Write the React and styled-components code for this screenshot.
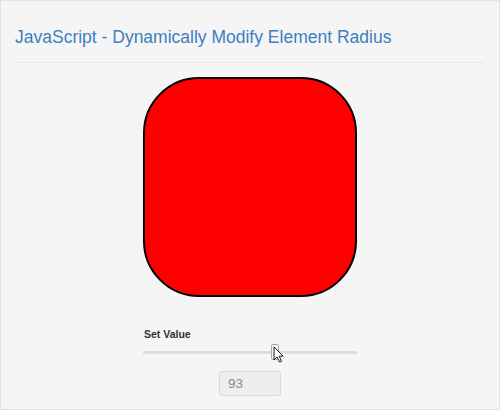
import React, { useState } from 'react';
import styled, { createGlobalStyle } from 'styled-components';

const GlobalStyle = createGlobalStyle`
  html, body {
    margin: 0;
    padding: 0;
    background: #ffffff;
  }
  * {
    box-sizing: border-box;
  }
`;

const MAX = 150;

const App = () => {
  const [radius, setRadius] = useState(93);

  return (
    <>
      <GlobalStyle />
      <Panel>
        <Title>JavaScript - Dynamically Modify Element Radius</Title>
        <Divider />
        <Stage>
          <Shape style={{ borderRadius: `${Math.round(radius * 0.6)}px` }} />
          <Controls>
            <Label>Set Value</Label>
            <SliderWrap>
              <Slider
                type="range"
                min="0"
                max={MAX}
                value={radius}
                onChange={e => setRadius(Number(e.target.value))}
              />
              <Pointer viewBox="0 0 12 19" style={{ left: `${4 + (radius / MAX) * 206 - 2}px` }}>
                <path
                  d="M1 1 L1 15.5 L4.5 12.2 L7.2 18 L9.4 17 L6.8 11.4 L11.2 11.4 Z"
                  fill="#fff"
                  stroke="#000"
                  strokeWidth="1"
                  strokeLinejoin="round"
                />
              </Pointer>
            </SliderWrap>
            <ValueBox type="text" value={radius} disabled readOnly />
          </Controls>
        </Stage>
      </Panel>
    </>
  );
};

// --- STYLES ---

const Panel = styled.div`
  width: 500px;
  height: 410px;
  background: #f5f5f5;
  border: 1px solid #e3e3e3;
  padding: 26px 14px 0;
  font-family: "Liberation Sans", Arial, sans-serif;
`;

const Title = styled.h3`
  margin: 0;
  font-size: 17.5px;
  font-weight: normal;
  line-height: 20px;
  color: #3d80c1;
`;

const Divider = styled.hr`
  margin: 15px 0 0;
  border: 0;
  border-top: 1px solid #e6e6e6;
`;

const Stage = styled.div`
  display: flex;
  flex-direction: column;
  align-items: center;
  padding-top: 14px;
`;

const Shape = styled.div`
  width: 214px;
  height: 220px;
  background: #ff0000;
  border: 2px solid #000;
`;

const Controls = styled.div`
  width: 214px;
  display: flex;
  flex-direction: column;
  align-items: center;
  margin-top: 30px;
`;

const Label = styled.label`
  align-self: flex-start;
  margin-left: 1px;
  font-size: 10.5px;
  font-weight: bold;
  line-height: 14px;
  color: #333;
`;

const SliderWrap = styled.div`
  position: relative;
  width: 100%;
  height: 16px;
  margin-top: 3px;
`;

const Slider = styled.input`
  -webkit-appearance: none;
  appearance: none;
  display: block;
  width: 100%;
  height: 16px;
  margin: 0;
  background: transparent;

  &::-webkit-slider-runnable-track {
    height: 3px;
    background: #e2ded7;
    border-radius: 1px;
  }

  &::-webkit-slider-thumb {
    -webkit-appearance: none;
    width: 8px;
    height: 16px;
    margin-top: -7px;
    background: #fbfbfb;
    border: 1px solid #a9a9a9;
    border-radius: 2px;
  }

  &:focus {
    outline: none;
  }
`;

const Pointer = styled.svg`
  position: absolute;
  top: 2px;
  width: 11px;
  height: 17px;
  pointer-events: none;
`;

const ValueBox = styled.input`
  width: 62px;
  height: 25px;
  margin-top: 11px;
  padding: 0 8px;
  font-family: "Liberation Sans", Arial, sans-serif;
  font-size: 13.5px;
  color: #8a8a8a;
  background: #eeeeee;
  border: 1px solid #d9d9d9;
  border-radius: 3px;
  -webkit-text-fill-color: #8a8a8a;
  opacity: 1;
`;

export default App;
